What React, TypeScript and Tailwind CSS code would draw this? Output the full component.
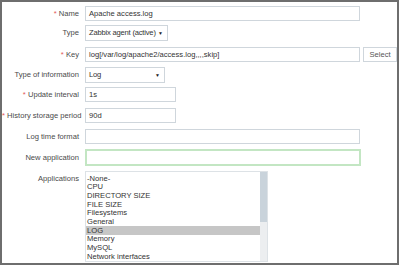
import React from "react";

const apps = [
  "-None-",
  "CPU",
  "DIRECTORY SIZE",
  "FILE SIZE",
  "Filesystems",
  "General",
  "LOG",
  "Memory",
  "MySQL",
  "Network interfaces",
];

function Label({ text, req }: { text: string; req?: boolean }) {
  return (
    <div className="w-[78px] shrink-0 pr-[1px] text-right whitespace-nowrap text-[#4a4a4a]">
      {req && <span className="text-[#e45959]">* </span>}
      {text}
    </div>
  );
}

function Field({ value, w }: { value?: string; w: string }) {
  return (
    <div className={`${w} h-full border border-[#cfd6dc] bg-white px-[3px] flex items-center text-[#333] whitespace-nowrap overflow-hidden`}>
      {value}
    </div>
  );
}

function Dropdown({ value, w }: { value: string; w: string }) {
  return (
    <div className={`${w} h-full border border-[#cfd6dc] bg-white pl-[3px] pr-[4px] flex items-center justify-between text-[#333] whitespace-nowrap`}>
      <span className="tracking-[-0.2px]">{value}</span>
      <span className="text-[5px] text-[#222]">▼</span>
    </div>
  );
}

export default function App() {
  return (
    <div className="w-[399px] h-[265px] border-2 border-[#6e6e6e] bg-white text-[7.6px] leading-none overflow-hidden" style={{ fontFamily: '"Liberation Sans", Arial, sans-serif' }}>
      <div className="flex flex-col pt-[4px]">
        <div className="flex items-center gap-[5px] h-[15px]">
          <Label text="Name" req />
          <Field value="Apache access.log" w="w-[275px]" />
        </div>
        <div className="flex items-center gap-[5px] h-[16px] mt-[4px]">
          <Label text="Type" />
          <Dropdown value="Zabbix agent (active)" w="w-[83px]" />
        </div>
        <div className="flex items-center gap-[5px] h-[15px] mt-[6px]">
          <Label text="Key" req />
          <Field value="log[/var/log/apache2/access.log,,,,skip]" w="w-[275px]" />
          <div className="h-full w-[34px] -ml-[2px] border border-[#cfd6dc] bg-white flex items-center justify-center text-[#555]">
            Select
          </div>
        </div>
        <div className="flex items-center gap-[5px] h-[16px] mt-[5px]">
          <Label text="Type of information" />
          <Dropdown value="Log" w="w-[80px]" />
        </div>
        <div className="flex items-center gap-[5px] h-[15px] mt-[4px]">
          <Label text="Update interval" req />
          <Field value="1s" w="w-[91px]" />
        </div>
        <div className="flex items-center gap-[5px] h-[15px] mt-[6px]">
          <Label text="History storage period" req />
          <Field value="90d" w="w-[91px]" />
        </div>
        <div className="flex items-center gap-[5px] h-[15px] mt-[6px]">
          <Label text="Log time format" />
          <Field w="w-[275px]" />
        </div>
        <div className="flex items-center gap-[5px] h-[17px] mt-[5px]">
          <Label text="New application" />
          <div className="w-[276px] h-full border-2 border-[#c3e6c3] bg-white" />
        </div>
        <div className="flex items-start gap-[5px] mt-[5px]">
          <div className="pt-[4px]">
            <Label text="Applications" />
          </div>
          <div className="w-[183px] h-[91px] border border-[#dde2e6] bg-white flex">
            <div className="flex-1 flex flex-col pt-[2px] text-[#333]">
              {apps.map((a) => (
                <div key={a} className={`h-[8.7px] flex items-center pl-[1px] ${a === "LOG" ? "bg-[#c6c6c6]" : ""}`}>
                  {a}
                </div>
              ))}
            </div>
            <div className="w-[7px] h-full bg-[#eceef0] flex flex-col">
              <div className="h-[50px] bg-[#c9d3db]" />
            </div>
          </div>
        </div>
      </div>
    </div>
  );
}
